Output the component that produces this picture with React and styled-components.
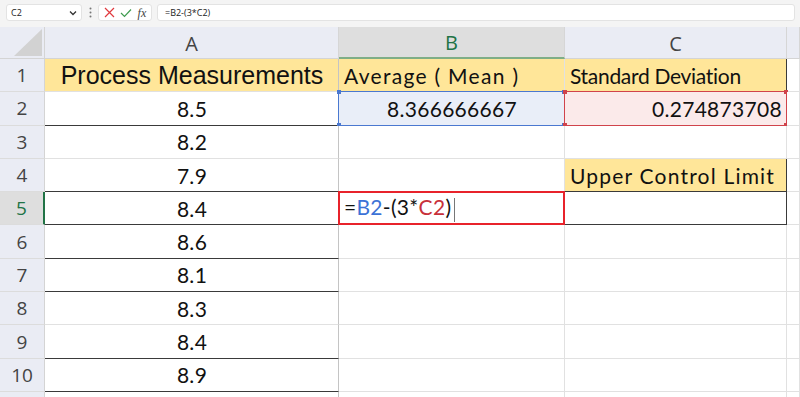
import React from "react";
import styled, { createGlobalStyle } from "styled-components";

const GlobalStyle = createGlobalStyle`
  html, body {
    margin: 0;
    padding: 0;
    background: #ffffff;
    overflow: hidden;
  }
  body {
    font-family: "Open Sans", "Noto Sans", sans-serif;
  }
`;

const YELLOW = "#ffe699";
const DARK = "#3a3a3a";
const GRID = "#e1e1e1";
const HEAD_BG = "#eaecf4";
const GREEN = "#217346";

const Page = styled.div`
  width: 800px;
  height: 397px;
  display: flex;
  flex-direction: column;
  overflow: hidden;
`;

/* ---------- formula bar ---------- */

const FormulaBar = styled.div`
  flex-shrink: 0;
  height: 27px;
  display: flex;
  align-items: flex-start;
  padding: 4px 5px 0 6px;
  box-sizing: border-box;
  background: #f4f4f4;
`;

const BarBox = styled.div`
  height: 17px;
  box-sizing: border-box;
  background: #ffffff;
  border: 1px solid #e3e3e3;
  border-radius: 3px;
  display: flex;
  align-items: center;
  font-family: "Open Sans", sans-serif;
  font-size: 9px;
  color: #222;
`;

const NameBox = styled(BarBox)`
  width: 76px;
  padding: 0 4px 0 4px;
  justify-content: space-between;
`;

const Dots = styled.div`
  width: 16px;
  display: flex;
  justify-content: center;
  align-items: center;
  height: 17px;
`;

const ActionBox = styled(BarBox)`
  width: 54px;
  justify-content: space-around;
  padding: 0 2px;
`;

const Fx = styled.span`
  font-family: "Liberation Serif", serif;
  font-style: italic;
  font-size: 12px;
  color: #444;
  line-height: 1;
`;

const FormulaInput = styled(BarBox)`
  flex: 1;
  margin-left: 5px;
  padding-left: 7px;
`;

/* ---------- sheet grid ---------- */

const Sheet = styled.div`
  flex-shrink: 0;
  display: grid;
  grid-template-columns: 45px 294px 226px 222px 13px;
  grid-template-rows: 32px repeat(11, 33.3px);
  background: #ffffff;
`;

const Corner = styled.div`
  background: ${HEAD_BG};
  border-right: 1px solid #d4d4d4;
  border-bottom: 1px solid #d4d4d4;
  box-sizing: border-box;
  display: flex;
  align-items: flex-end;
  justify-content: flex-end;
  padding: 0 2px 2px 0;
`;

const ColHeader = styled.div`
  background: ${(p) => (p.$active ? "#dedede" : HEAD_BG)};
  color: ${(p) => (p.$active ? GREEN : "#444")};
  border-right: 1px solid #d6d6d6;
  border-bottom: ${(p) => (p.$active ? `2px solid #7fae86` : "1px solid #d4d4d4")};
  box-sizing: border-box;
  display: flex;
  align-items: center;
  justify-content: center;
  font-family: "Open Sans", sans-serif;
  font-size: 20px;
  padding-top: 1px;
`;

const RowHeader = styled.div`
  background: ${(p) => (p.$active ? "#dedede" : HEAD_BG)};
  color: ${(p) => (p.$active ? GREEN : "#444")};
  border-right: ${(p) => (p.$active ? `2px solid ${GREEN}` : "1px solid #d4d4d4")};
  border-bottom: 1px solid #dcdcdc;
  box-sizing: border-box;
  display: flex;
  align-items: center;
  justify-content: center;
  font-family: "Open Sans", sans-serif;
  font-size: 19px;
`;

const Cell = styled.div`
  position: relative;
  box-sizing: border-box;
  background: ${(p) => p.$fill || "#ffffff"};
  border-right: 1px solid ${(p) => p.$br || GRID};
  border-bottom: 1px solid ${(p) => p.$bb || GRID};
  display: flex;
  align-items: center;
  justify-content: ${(p) =>
    p.$align === "left" ? "flex-start" : p.$align === "right" ? "flex-end" : "center"};
  padding: 0 4px 0 5px;
  font-family: ${(p) =>
    p.$arial ? '"Liberation Sans", Arial, sans-serif' : 'Lato, "Open Sans", sans-serif'};
  font-size: ${(p) => (p.$arial ? "25px" : "21px")};
  letter-spacing: ${(p) => (p.$track != null ? p.$track : p.$arial ? "0" : "0.3px")};
  color: #111;
  white-space: nowrap;
  overflow: visible;
`;

const RefFrame = styled.div`
  position: absolute;
  inset: -1px -1px -1px -1px;
  border: 1px solid ${(p) => p.$color};
  pointer-events: none;
`;

const Handle = styled.span`
  position: absolute;
  width: 4px;
  height: 4px;
  background: ${(p) => p.$color};
  ${(p) => (p.$top ? "top: -2px;" : "bottom: -2px;")}
  ${(p) => (p.$left ? "left: -2px;" : "right: -2px;")}
`;

const ActiveFrame = styled.div`
  position: absolute;
  inset: -1px -1px -1px -1px;
  border: 2px solid #e8232b;
  pointer-events: none;
`;

const RefB = styled.span`
  color: #3c72d6;
`;

const RefC = styled.span`
  color: #c8303a;
`;

const Caret = styled.span`
  display: inline-block;
  width: 1px;
  height: 24px;
  background: #777;
  margin-left: 3px;
  vertical-align: middle;
`;

const ChevronIcon = () => (
  <svg width="8" height="6" viewBox="0 0 8 6">
    <path d="M1 1.5 L4 4.5 L7 1.5" fill="none" stroke="#333" strokeWidth="1.3" />
  </svg>
);

const DotsIcon = () => (
  <svg width="3" height="11" viewBox="0 0 3 11">
    <circle cx="1.5" cy="1.5" r="1" fill="#777" />
    <circle cx="1.5" cy="5.5" r="1" fill="#777" />
    <circle cx="1.5" cy="9.5" r="1" fill="#777" />
  </svg>
);

const CrossIcon = () => (
  <svg width="11" height="11" viewBox="0 0 11 11">
    <path d="M1 1 L10 10 M10 1 L1 10" stroke="#e0393e" strokeWidth="1.2" fill="none" />
  </svg>
);

const CheckIcon = () => (
  <svg width="12" height="10" viewBox="0 0 12 10">
    <path d="M1 5 L4.5 8.5 L11 1.5" stroke="#3f9b4f" strokeWidth="1.2" fill="none" />
  </svg>
);

const SelectAllIcon = () => (
  <svg width="28" height="27" viewBox="0 0 28 27">
    <polygon points="28,0 28,27 0,27" fill="#d2d2d2" />
  </svg>
);

const Frame = ({ color }) => (
  <RefFrame $color={color}>
    <Handle $color={color} $top $left />
    <Handle $color={color} $top />
    <Handle $color={color} $left />
    <Handle $color={color} />
  </RefFrame>
);

const rows = [
  {
    A: { text: "Process Measurements", $fill: YELLOW, $arial: true },
    B: { text: "Average ( Mean )", $fill: YELLOW, $align: "left", $track: "1.3px" },
    C: { text: "Standard Deviation", $fill: YELLOW, $align: "left", $br: DARK, $track: "-0.3px" },
  },
  {
    A: { text: "8.5", $bb: DARK },
    B: { text: "8.366666667", $fill: "#e9eef8", ref: "#4a78d0" },
    C: { text: "0.274873708", $fill: "#fbeaea", $align: "right", ref: "#d0434b" },
  },
  { A: { text: "8.2" } },
  {
    A: { text: "7.9", $bb: DARK },
    C: {
      text: "Upper Control Limit",
      $fill: YELLOW,
      $align: "left",
      $bb: DARK,
      $br: DARK,
      $track: "1.2px",
    },
  },
  {
    A: { text: "8.4", $bb: DARK },
    B: { formula: true, $align: "left" },
    C: { $bb: DARK, $br: DARK },
  },
  { A: { text: "8.6", $bb: DARK } },
  { A: { text: "8.1", $bb: DARK } },
  { A: { text: "8.3" } },
  { A: { text: "8.4", $bb: DARK } },
  { A: { text: "8.9", $bb: DARK } },
  { A: {} },
];

const renderCell = (cell = {}, key, extra = {}) => {
  const { text, ref, formula, ...props } = { ...extra, ...cell };
  return (
    <Cell key={key} {...props}>
      {formula ? (
        <span>
          =<RefB>B2</RefB>-(3*<RefC>C2</RefC>)<Caret />
        </span>
      ) : (
        text
      )}
      {ref && <Frame color={ref} />}
      {formula && <ActiveFrame />}
    </Cell>
  );
};

export default function App() {
  return (
    <Page>
      <GlobalStyle />
      <FormulaBar>
        <NameBox>
          <span>C2</span>
          <ChevronIcon />
        </NameBox>
        <Dots>
          <DotsIcon />
        </Dots>
        <ActionBox>
          <CrossIcon />
          <CheckIcon />
          <Fx>fx</Fx>
        </ActionBox>
        <FormulaInput>=B2-(3*C2)</FormulaInput>
      </FormulaBar>
      <Sheet>
        <Corner>
          <SelectAllIcon />
        </Corner>
        <ColHeader>A</ColHeader>
        <ColHeader $active>B</ColHeader>
        <ColHeader>C</ColHeader>
        <ColHeader />
        {rows.map((row, i) => (
          <React.Fragment key={i}>
            <RowHeader $active={i === 4}>{i < 10 ? i + 1 : ""}</RowHeader>
            {renderCell(row.A, `a${i}`, { $br: "#c4c4c4" })}
            {renderCell(row.B, `b${i}`)}
            {renderCell(row.C, `c${i}`)}
            {renderCell(undefined, `d${i}`)}
          </React.Fragment>
        ))}
      </Sheet>
    </Page>
  );
}
